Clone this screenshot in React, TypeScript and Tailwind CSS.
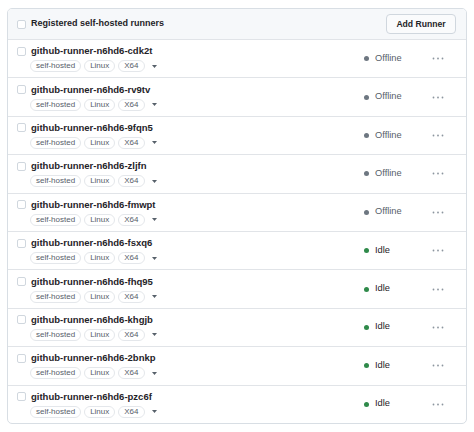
import React from "react";

type Runner = {
  name: string;
  status: "Offline" | "Idle";
};

const RUNNERS: Runner[] = [
  { name: "github-runner-n6hd6-cdk2t", status: "Offline" },
  { name: "github-runner-n6hd6-rv9tv", status: "Offline" },
  { name: "github-runner-n6hd6-9fqn5", status: "Offline" },
  { name: "github-runner-n6hd6-zljfn", status: "Offline" },
  { name: "github-runner-n6hd6-fmwpt", status: "Offline" },
  { name: "github-runner-n6hd6-fsxq6", status: "Idle" },
  { name: "github-runner-n6hd6-fhq95", status: "Idle" },
  { name: "github-runner-n6hd6-khgjb", status: "Idle" },
  { name: "github-runner-n6hd6-2bnkp", status: "Idle" },
  { name: "github-runner-n6hd6-pzc6f", status: "Idle" },
];

const LABELS = ["self-hosted", "Linux", "X64"];

function Checkbox() {
  return <span className="block h-[9px] w-[9px] shrink-0 rounded-[2px] border border-[#d0d7de] bg-white" />;
}

function Kebab() {
  return (
    <svg width="12" height="3" viewBox="0 0 12 3" className="text-[#8c959f]">
      <circle cx="1.5" cy="1.5" r="0.9" fill="currentColor" />
      <circle cx="6" cy="1.5" r="0.9" fill="currentColor" />
      <circle cx="10.5" cy="1.5" r="0.9" fill="currentColor" />
    </svg>
  );
}

function RunnerRow({ runner }: { runner: Runner }) {
  const idle = runner.status === "Idle";
  return (
    <div className="flex h-[38.4px] items-center border-t border-[#e1e4e8] pl-[9px] pr-[20px]">
      <div className="flex flex-1 flex-col">
        <div className="flex h-[12px] items-center gap-[5px]">
          <Checkbox />
          <span className="text-[9.5px] font-bold leading-[12px] text-[#1f2328]">{runner.name}</span>
        </div>
        <div className="ml-[13px] mt-[3px] flex h-[12px] items-center gap-[3px]">
          {LABELS.map((l) => (
            <span
              key={l}
              className="flex h-[12px] items-center rounded-full border border-[#e4e7eb] px-[5px] text-[8px] leading-none text-[#57606a]"
            >
              {l}
            </span>
          ))}
          <svg width="5" height="3" viewBox="0 0 5 3" className="ml-[4px] text-[#57606a]">
            <path d="M0 0h5L2.5 3z" fill="currentColor" />
          </svg>
        </div>
      </div>
      <div className="flex w-[70px] items-center gap-[6px] pl-[2px]">
        <span className={`block h-[5px] w-[5px] rounded-full ${idle ? "bg-[#2f8a4a]" : "bg-[#6e7781]"}`} />
        <span className={`text-[9.3px] ${idle ? "text-[#1f2328]" : "text-[#57606a]"}`}>{runner.status}</span>
      </div>
      <div className="flex w-[14px] items-center justify-start">
        <Kebab />
      </div>
    </div>
  );
}

export default function App() {
  return (
    <div className="min-h-screen bg-white pt-[8px] font-['Liberation_Sans',Arial,sans-serif]">
      <div className="mx-[7px] overflow-hidden rounded-[5px] border border-[#d8dee4]">
        <div className="flex h-[30px] items-center bg-[#f6f8fa] pl-[9px] pr-[10px]">
          <div className="flex flex-1 items-center gap-[5px]">
            <Checkbox />
            <span className="text-[9px] font-bold text-[#1f2328]">Registered self-hosted runners</span>
          </div>
          <button className="flex h-[20px] w-[70px] items-center justify-center rounded-[4px] border border-[#d0d7de] bg-[#fafbfc] text-[8.6px] font-bold text-[#1f2328]">
            Add Runner
          </button>
        </div>
        {RUNNERS.map((r) => (
          <RunnerRow key={r.name} runner={r} />
        ))}
      </div>
    </div>
  );
}
